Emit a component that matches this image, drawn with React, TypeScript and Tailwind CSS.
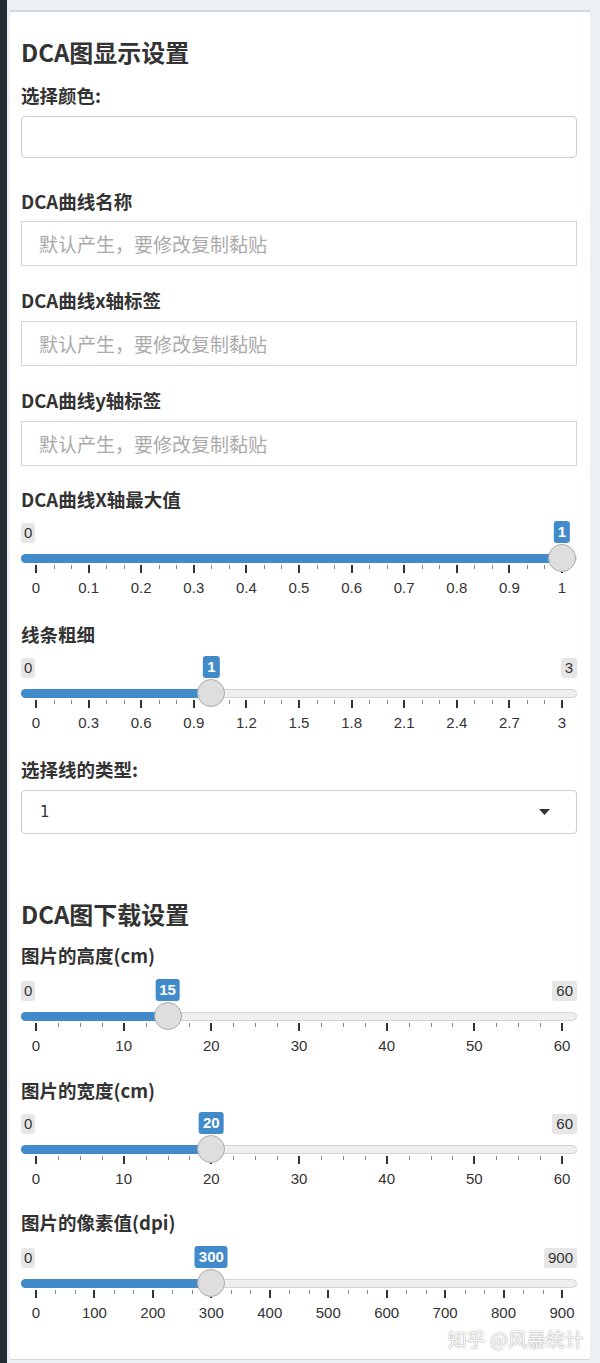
import React from 'react';

interface SliderSpec {
  min: number;
  max: number;
  value: number;
  intervals: number;
  minor: number;
  showMax: boolean;
}

const CJK = "font-['Noto_Sans_CJK_SC','Noto_Sans',sans-serif]";

// axis runs from 15px to 541px inside the 556px slider box
const axis = (p: number) => 15 + p * 526;

function fmt(v: number) {
  return String(Number(v.toFixed(2)));
}

function RangeSlider({ min, max, value, intervals, minor, showMax }: SliderSpec) {
  const handleX = axis((value - min) / (max - min));
  const majors = Array.from({ length: intervals + 1 }, (_, i) => i);
  const minors: number[] = [];
  for (let i = 0; i < intervals; i++) {
    for (let k = 1; k <= minor; k++) minors.push((i + k / (minor + 1)) / intervals);
  }

  return (
    <div className="relative h-[76px] w-full font-['Liberation_Sans',Arial,sans-serif]">
      {/* min / max labels */}
      <span className="absolute left-0 top-[2px] h-[20px] rounded-[3px] bg-[#e6e6e6] px-[3px] text-[15px] leading-[20px] text-[#333]">
        {min}
      </span>
      {showMax && (
        <span className="absolute right-0 top-[2px] h-[20px] rounded-[3px] bg-[#e6e6e6] px-[4px] text-[15px] leading-[20px] text-[#333]">
          {max}
        </span>
      )}

      {/* track */}
      <div className="absolute left-0 right-0 top-[33px] h-[9px] rounded-full border border-[#d4d4d4] bg-[#eeeeee]" />
      <div className="absolute left-0 top-[33px] h-[9px] rounded-l-full bg-[#428bca]" style={{ width: handleX }} />

      {/* grid */}
      {minors.map((p, i) => (
        <div key={'m' + i} className="absolute top-[44px] h-[4px] w-px bg-[#888]" style={{ left: axis(p) }} />
      ))}
      {majors.map((i) => (
        <div key={'M' + i} className="absolute top-[44px] h-[8px] w-[2px] -translate-x-1/2 bg-[#333]" style={{ left: axis(i / intervals) }} />
      ))}
      {majors.map((i) => (
        <span
          key={'L' + i}
          className="absolute top-[58px] -translate-x-1/2 text-[15px] leading-[18px] text-[#333]"
          style={{ left: axis(i / intervals) }}
        >
          {fmt(min + ((max - min) * i) / intervals)}
        </span>
      ))}

      {/* handle + value */}
      <div
        className="absolute top-[23px] h-[28px] w-[28px] -translate-x-1/2 rounded-full border border-[#ababab] bg-[#dedede]"
        style={{ left: handleX }}
      />
      <span
        className="absolute top-0 h-[22px] -translate-x-1/2 rounded-[3px] bg-[#428bca] px-[4px] text-[15px] font-bold leading-[22px] text-white"
        style={{ left: handleX }}
      >
        {value}
      </span>
    </div>
  );
}

function Label({ children, className = '' }: { children: React.ReactNode; className?: string }) {
  return <div className={`h-[22px] text-[18.5px] font-bold leading-[22px] text-[#333] ${CJK} ${className}`}>{children}</div>;
}

function Title({ children, className = '' }: { children: React.ReactNode; className?: string }) {
  return <h3 className={`h-[30px] text-[24px] font-semibold leading-[30px] text-[#333] ${CJK} ${className}`}>{children}</h3>;
}

function TextBox({ className = '' }: { className?: string }) {
  return (
    <input
      readOnly
      placeholder="默认产生，要修改复制黏贴"
      className={`block h-[45px] w-full border border-[#d2d6de] bg-white pl-[17px] text-[19px] text-[#333] outline-none placeholder:text-[#aaaaaa] ${CJK} ${className}`}
    />
  );
}

export default function App() {
  return (
    <div className="flex min-h-[1363px] w-[600px] bg-[#ecf0f5]">
      <div className="w-[7px] shrink-0 bg-[#222d32]" />
      <div className="ml-[3px] mt-[10px] flex w-[580px] flex-col self-start border-t-2 border-[#d2d6de] bg-white pb-[9px] pl-[11px] pr-[13px] shadow-[0_1px_1px_rgba(0,0,0,0.1)]">
        <Title className="mt-[25px]">DCA图显示设置</Title>

        <Label className="mt-[17px]">选择颜色:</Label>
        <div className="mt-[10px] h-[42px] w-full rounded-[4px] border border-[#cccccc] bg-white" />

        <Label className="mt-[32px]">DCA曲线名称</Label>
        <TextBox className="mt-[9px]" />

        <Label className="mt-[23px]">DCA曲线x轴标签</Label>
        <TextBox className="mt-[10px]" />

        <Label className="mt-[23px]">DCA曲线y轴标签</Label>
        <TextBox className="mt-[10px]" />

        <Label className="mt-[22px]">DCA曲线X轴最大值</Label>
        <div className="mt-[11px]">
          <RangeSlider min={0} max={1} value={1} intervals={10} minor={2} showMax={false} />
        </div>

        <Label className="mt-[26px]">线条粗细</Label>
        <div className="mt-[11px]">
          <RangeSlider min={0} max={3} value={1} intervals={10} minor={2} showMax />
        </div>

        <Label className="mt-[26px]">选择线的类型:</Label>
        <div className="mt-[10px] flex h-[44px] w-full items-center justify-between rounded-[4px] border border-[#cccccc] bg-white pl-[18px] pr-[26px]">
          <span className="font-['DejaVu_Sans',sans-serif] text-[15px] text-[#333]">1</span>
          <svg width="11" height="6" viewBox="0 0 11 6">
            <path d="M0 0 L11 0 L5.5 6 Z" fill="#333" />
          </svg>
        </div>

        <Title className="mt-[65px]">DCA图下载设置</Title>

        <Label className="mt-[15px]">图片的高度(cm)</Label>
        <div className="mt-[13px]">
          <RangeSlider min={0} max={60} value={15} intervals={6} minor={3} showMax />
        </div>

        <Label className="mt-[24px]">图片的宽度(cm)</Label>
        <div className="mt-[11px]">
          <RangeSlider min={0} max={60} value={20} intervals={6} minor={3} showMax />
        </div>

        <Label className="mt-[23px]">图片的像素值(dpi)</Label>
        <div className="mt-[13px]">
          <RangeSlider min={0} max={900} value={300} intervals={9} minor={2} showMax />
        </div>

        <div className={`mr-[-7px] mt-[6px] h-[22px] text-right text-[19px] leading-[22px] text-[#fafafa] [text-shadow:0_0_1.5px_#7a7a7a] ${CJK}`}>
          知乎 @风暴统计
        </div>
      </div>
    </div>
  );
}
